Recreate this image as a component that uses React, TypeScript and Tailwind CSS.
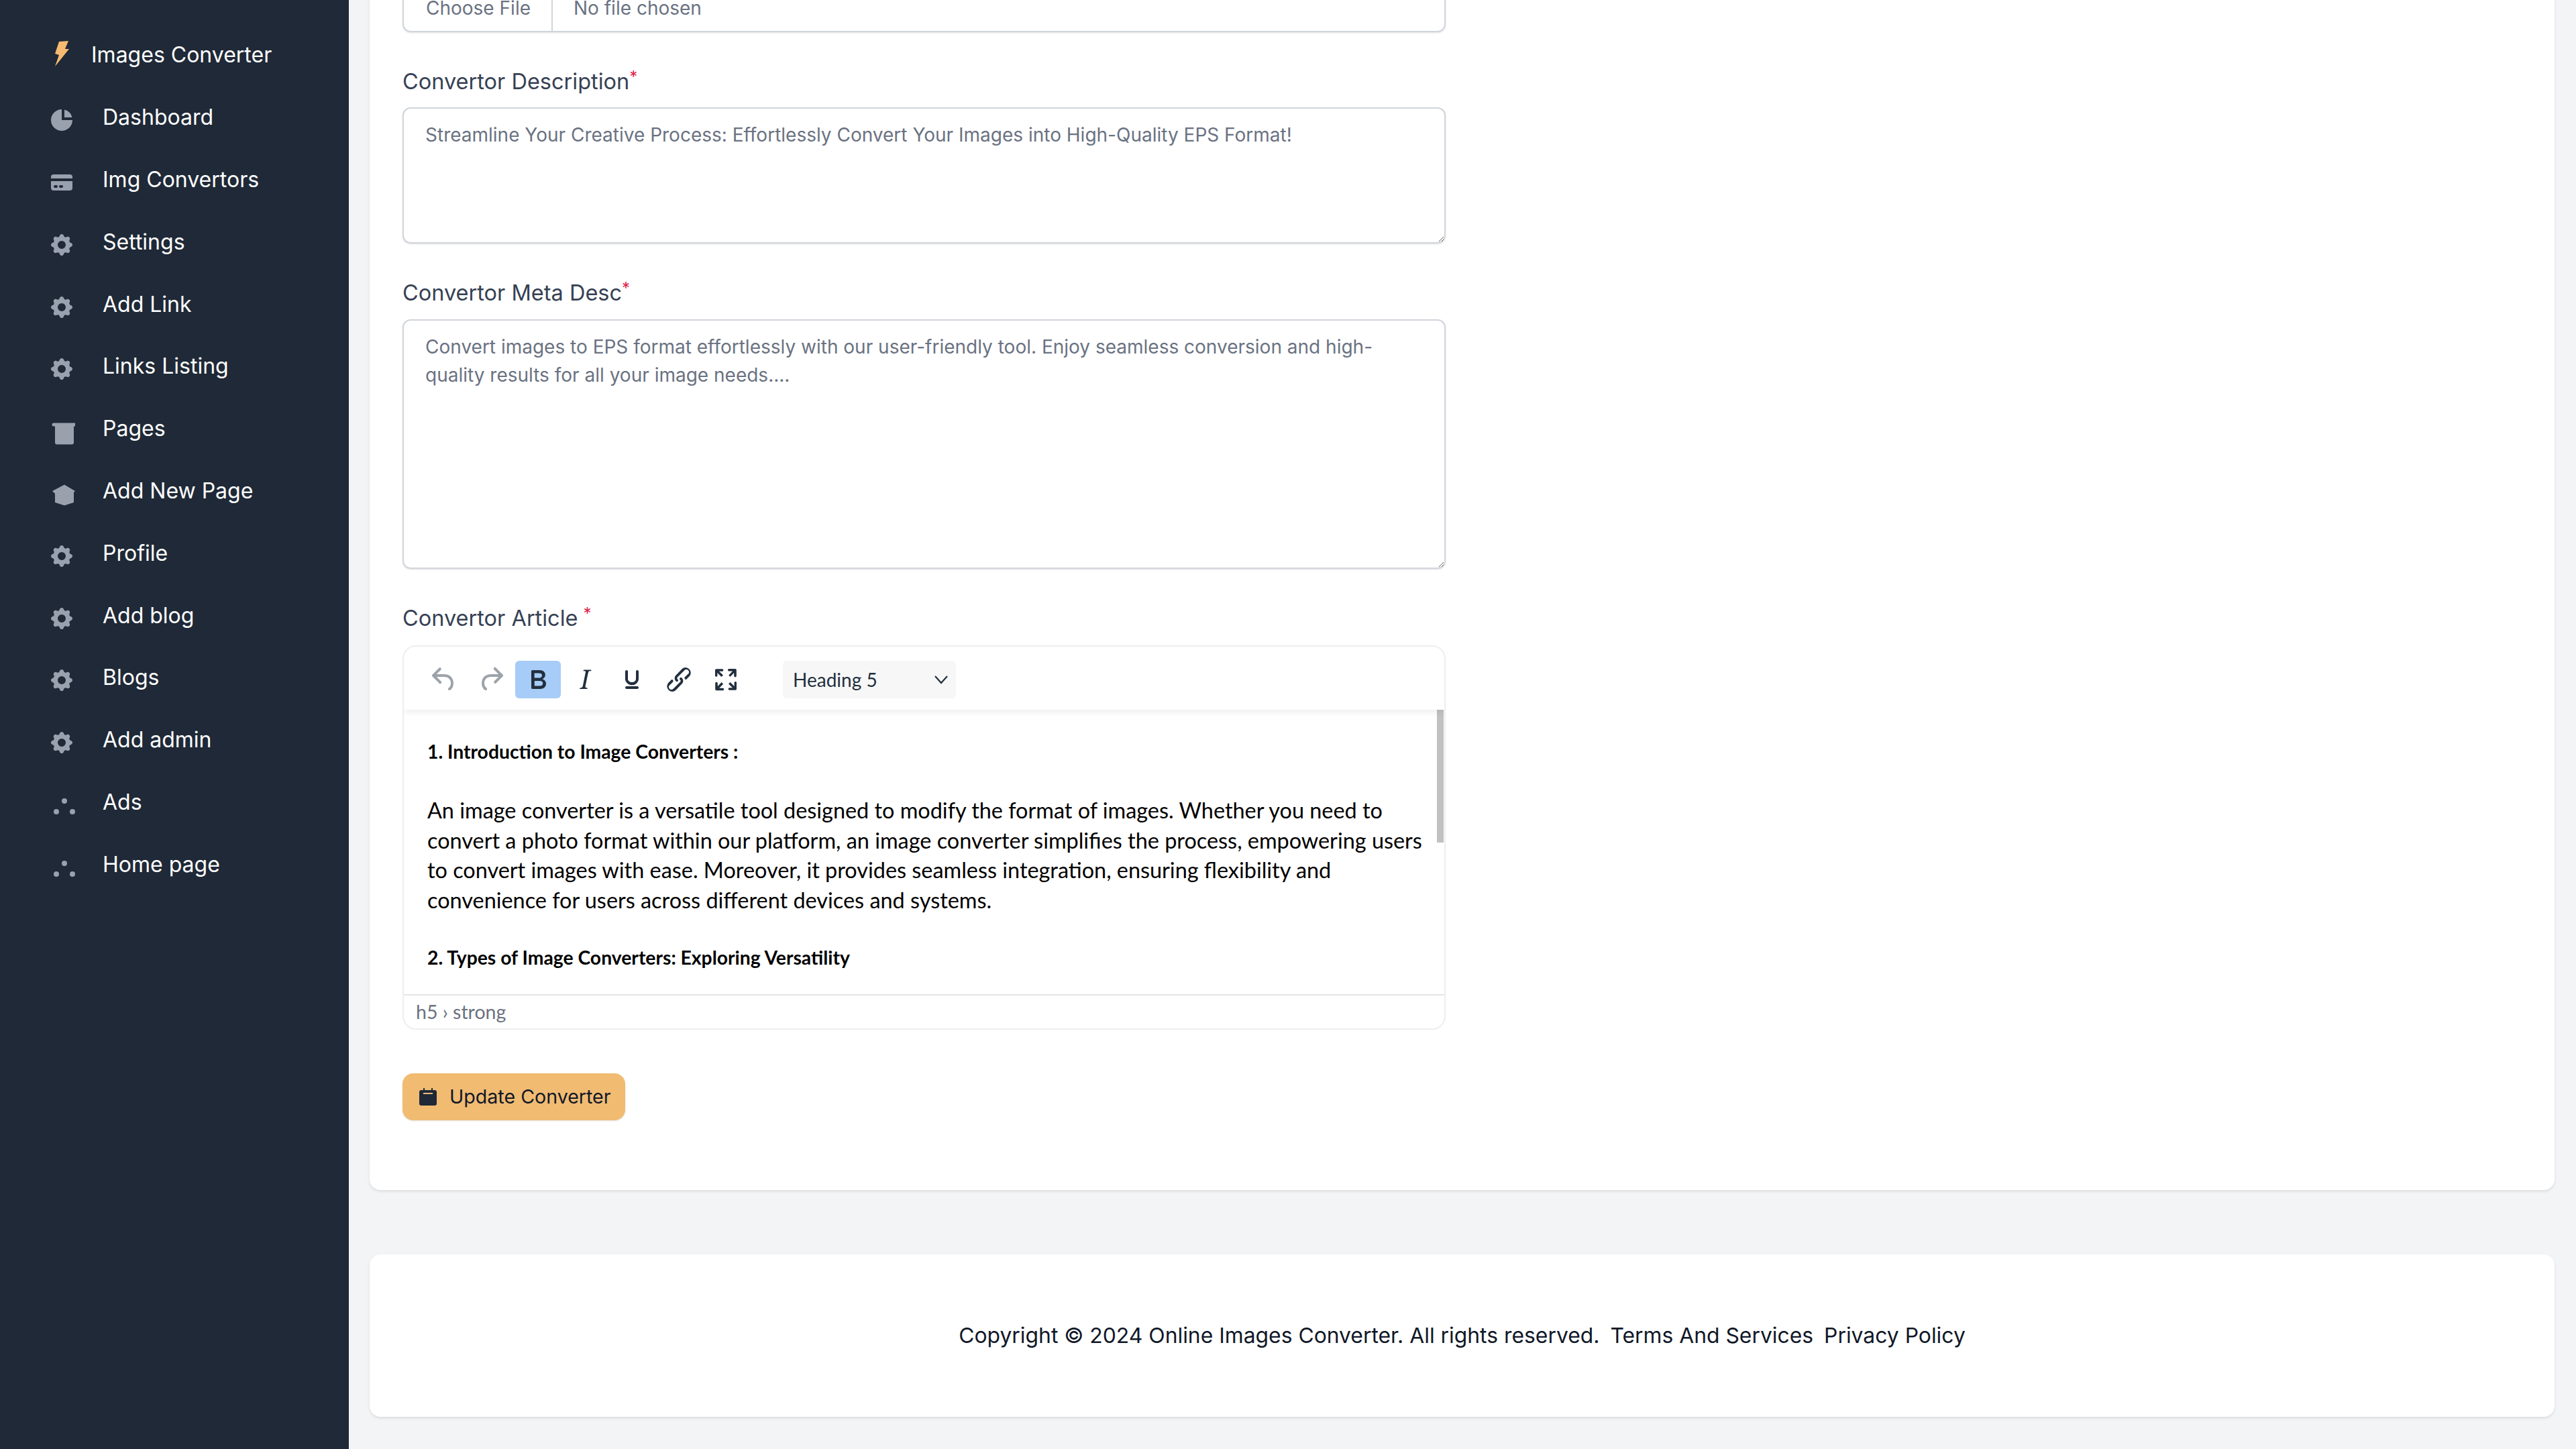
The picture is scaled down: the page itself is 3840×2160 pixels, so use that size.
const GEAR =
  "M11.49 3.17c-.38-1.56-2.6-1.56-2.98 0a1.532 1.532 0 01-2.286.948c-1.372-.836-2.942.734-2.106 2.106.54.886.061 2.042-.947 2.287-1.561.379-1.561 2.6 0 2.978a1.532 1.532 0 01.947 2.287c-.836 1.372.734 2.942 2.106 2.106a1.532 1.532 0 012.287.947c.379 1.561 2.6 1.561 2.978 0a1.533 1.533 0 012.287-.947c1.372.836 2.942-.734 2.106-2.106a1.533 1.533 0 01.947-2.287c1.561-.379 1.561-2.6 0-2.978a1.532 1.532 0 01-.947-2.287c.836-1.372-.734-2.942-2.106-2.106a1.532 1.532 0 01-2.287-.947zM10 13a3 3 0 100-6 3 3 0 000 6z";

function SideIcon({ name }: { name: string }) {
  if (name === "pie") {
    return (
      <svg viewBox="0 0 20 20" fill="currentColor" className="w-10 h-10 text-gray-400">
        <path d="M2 10a8 8 0 018-8v8h8a8 8 0 11-16 0z" />
        <path d="M12 2.252A8.014 8.014 0 0117.748 8H12V2.252z" />
      </svg>
    );
  }
  if (name === "card") {
    return (
      <svg viewBox="0 0 20 20" fill="currentColor" className="w-10 h-10 text-gray-400">
        <path d="M4 4a2 2 0 00-2 2v1h16V6a2 2 0 00-2-2H4z" />
        <path
          fillRule="evenodd"
          d="M18 9H2v5a2 2 0 002 2h12a2 2 0 002-2V9zM4 13a1 1 0 011-1h1a1 1 0 110 2H5a1 1 0 01-1-1zm5-1a1 1 0 100 2h1a1 1 0 100-2H9z"
        />
      </svg>
    );
  }
  if (name === "box") {
    return (
      <svg viewBox="0 0 20 20" fill="currentColor" className="w-10 h-10 text-gray-400 translate-x-[4px]">
        <path d="M2 3.75h16v2.500H2a1.250 1.250 0 010-2.500z" />
        <path d="M3 6h14v12.250a1.500 1.500 0 01-1.500 1.500h-11a1.500 1.500 0 01-1.500-1.500z" />
      </svg>
    );
  }
  if (name === "cap") {
    return (
      <svg viewBox="0 0 20 20" fill="currentColor" className="w-10 h-10 text-gray-400 translate-x-[4px]">
        <path d="M10 3.250L18 8l-1 1v7.500l-7 2.250-7-2.250V10L1 8z" />
      </svg>
    );
  }
  if (name === "dots") {
    return (
      <svg viewBox="0 0 20 20" fill="currentColor" className="w-10 h-10 text-gray-400 translate-x-[4px]">
        <circle cx="10" cy="7" r="2" />
        <circle cx="4" cy="15" r="2" />
        <circle cx="16" cy="15" r="2" />
      </svg>
    );
  }
  return (
    <svg viewBox="0 0 20 20" fill="currentColor" className="w-10 h-10 text-gray-400">
      <path fillRule="evenodd" d={GEAR} />
    </svg>
  );
}

const navItems = [
  { label: "Dashboard", icon: "pie" },
  { label: "Img Convertors", icon: "card" },
  { label: "Settings", icon: "gear" },
  { label: "Add Link", icon: "gear" },
  { label: "Links Listing", icon: "gear" },
  { label: "Pages", icon: "box" },
  { label: "Add New Page", icon: "cap" },
  { label: "Profile", icon: "gear" },
  { label: "Add blog", icon: "gear" },
  { label: "Blogs", icon: "gear" },
  { label: "Add admin", icon: "gear" },
  { label: "Ads", icon: "dots" },
  { label: "Home page", icon: "dots" },
];

function Sidebar() {
  return (
    <aside className="w-[520px] shrink-0 bg-[#1f2937] text-white pt-[36px]">
      <div className="flex items-center h-[92.800px] pl-[81px] text-[32px]">
        <svg viewBox="0 0 22 40" className="w-[22px] h-10 mb-[5px]" fill="#f6bb70">
          <path d="M7 2l14-1-5 12h6L1 39l6-17-6-2z" />
        </svg>
        <span className="ml-[33px]">Images Converter</span>
      </div>
      <ul>
        {navItems.map((item) => (
          <li key={item.label} className="flex items-center h-[92.800px] pl-[72px] text-[32px]">
            <span className="mt-[8px]">
              <SideIcon name={item.icon} />
            </span>
            <span className="ml-[41px]">{item.label}</span>
          </li>
        ))}
      </ul>
    </aside>
  );
}

function FieldLabel({ text, gap }: { text: string; gap?: boolean }) {
  return (
    <label className="flex h-10 items-center mt-[53px] text-[32.500px] text-gray-700 translate-y-[1px]">
      {text}
      <span className={gap ? "ml-[8px] mb-[14px] text-[#e11d48] text-[24px]" : "mb-[14px] text-[#e11d48] text-[24px]"}>*</span>
    </label>
  );
}

function ToolIcon({ d, muted, active }: { d: string; muted?: boolean; active?: boolean }) {
  return (
    <button
      className={
        active
          ? "flex items-center justify-center w-[68px] h-[56px] mr-[2px] rounded-[6px] bg-[#a6ccf7]"
          : "flex items-center justify-center w-[68px] h-[56px] mr-[2px] rounded-[6px]"
      }
    >
      <svg viewBox="0 0 24 24" className="w-12 h-12" fill={muted ? "#9da3aa" : "#222f3e"}>
        <path d={d} />
      </svg>
    </button>
  );
}

function Editor() {
  return (
    <div className="relative h-[573px] flex flex-col border-2 border-[#eeeeee] rounded-[20px] overflow-hidden font-['Lato',sans-serif]">
      <div className="flex items-center h-[94px] shrink-0 pl-[26px] pt-[4px] shadow-[0_4px_8px_rgba(34,47,62,0.08)] z-10 bg-white">
        <ToolIcon muted d="M6.4 8H12c3.7 0 6.2 2 6.8 5.1.6 2.7-.4 5.600-2.300 6.800a1 1 0 0 1-1-1.800c1.100-.6 1.800-2.700 1.400-4.600-.5-2.100-2.100-3.500-4.900-3.500H6.400l3.300 3.300a1 1 0 1 1-1.400 1.400l-5-5a1 1 0 0 1 0-1.400l5-5a1 1 0 0 1 1.400 1.400L6.400 8Z" />
        <ToolIcon muted d="M17.600 10H12c-2.800 0-4.400 1.400-4.900 3.500-.4 2 .3 4 1.400 4.600a1 1 0 1 1-1 1.800c-2-1.200-2.900-4.100-2.300-6.800.6-3 3-5.100 6.800-5.100h5.600l-3.300-3.300a1 1 0 1 1 1.400-1.400l5 5a1 1 0 0 1 0 1.400l-5 5a1 1 0 0 1-1.400-1.400l3.300-3.300Z" />
        <ToolIcon active d="M7.800 19c-.3 0-.5 0-.6-.2l-.2-.5V5.700c0-.2 0-.4.2-.5l.6-.2h5c1.500 0 2.700.3 3.500 1 .7.6 1.100 1.400 1.100 2.500a3 3 0 0 1-.6 1.900c-.4.6-1 1-1.600 1.200.4.100.9.300 1.300.6s.8.700 1 1.200c.4.400.5 1 .5 1.600 0 1.300-.4 2.300-1.300 3-.8.700-2.100 1-3.800 1H7.800zm5-8.300c.6 0 1.200-.1 1.600-.5.4-.3.6-.7.6-1.300 0-1.100-.8-1.700-2.300-1.700H9.300v3.500h3.400zm.5 6c.7 0 1.300-.1 1.700-.4.4-.4.6-.9.6-1.500s-.2-1-.7-1.400c-.4-.3-1-.4-2-.4H9.400v3.800h4z" />
        <ToolIcon d="m16.700 4.700-.1.900h-.3c-.6 0-1 0-1.400.3-.3.3-.4.600-.5 1.100l-2.100 9.800v.6c0 .5.4.8 1.400.8h.2l-.2.8H8l.2-.8h.2c1.100 0 1.800-.5 2-1.500l2-9.800.1-.5c0-.6-.4-.8-1.400-.8h-.3l.2-.9h5.800Z" />
        <ToolIcon d="M16 5c.6 0 1 .4 1 1v5.500a4 4 0 0 1-.4 1.800l-1 1.400a5.300 5.300 0 0 1-5.500 1 5 5 0 0 1-1.600-1c-.5-.4-.8-.9-1.100-1.400a4 4 0 0 1-.4-1.800V6c0-.6.4-1 1-1s1 .4 1 1v5.500c0 .3 0 .6.2 1l.6.7a3.300 3.300 0 0 0 2.200.8 3.400 3.400 0 0 0 2.200-.8c.3-.2.4-.5.6-.8l.2-.9V6c0-.6.4-1 1-1ZM8 17h8c.6 0 1 .4 1 1s-.4 1-1 1H8a1 1 0 0 1 0-2Z" />
        <ToolIcon d="M6.200 12.300a1 1 0 0 1 1.400 1.400l-2 2a2 2 0 1 0 2.600 2.800l4.800-4.800a1 1 0 0 0 0-1.400 1 1 0 1 1 1.400-1.300 2.900 2.900 0 0 1 0 4L9.600 20a3.900 3.900 0 0 1-5.500-5.500l2-2Zm11.600-.6a1 1 0 0 1-1.400-1.400l2-2a2 2 0 1 0-2.600-2.800L11 10.300a1 1 0 0 0 0 1.400A1 1 0 1 1 9.600 13a2.900 2.900 0 0 1 0-4L14.400 4a3.900 3.900 0 0 1 5.500 5.500l-2 2Z" />
        <ToolIcon d="m15.300 10-1.200-1.300 2.900-3h-2.300a.9.9 0 1 1 0-1.700H19c.5 0 .9.4.9.9v4.400a.9.9 0 1 1-1.800 0V7l-2.900 3Zm0 4 3 3v-2.300a.9.9 0 1 1 1.700 0V19c0 .5-.4.9-.9.9h-4.400a.9.9 0 1 1 0-1.800H17l-3-2.900 1.300-1.200ZM10 15.400l-2.900 3h2.300a.9.9 0 1 1 0 1.700H5a.9.9 0 0 1-.9-.9v-4.400a.9.9 0 1 1 1.800 0V17l2.900-3 1.200 1.300ZM8.700 10 5.700 7v2.300a.9.9 0 0 1-1.700 0V5c0-.5.4-.9.9-.9h4.400a.9.9 0 0 1 0 1.800H7l3 2.900-1.300 1.200Z" />
        <div className="ml-[49px] flex items-center justify-between w-[258px] h-[56px] pl-[15px] pr-[2px] rounded-[6px] bg-[#f7f7f7] text-[28px] text-[#222f3e]">
          <span>Heading 5</span>
          <svg viewBox="0 0 20 20" className="w-10 h-10" fill="none" stroke="#222f3e" strokeWidth="1.100">
            <path d="M5.500 7.500L10 12.500l4.500-5" />
          </svg>
        </div>
      </div>

      <div className="flex-1 overflow-hidden pl-[35px] pr-[24px] text-[32.400px] leading-[44.600px] text-black">
        <h5 className="text-[28.300px] font-bold mt-[44px] leading-[36px]">1. Introduction to Image Converters :</h5>
        <p className="mt-[48px] w-[1492px]">
          An image converter is a versatile tool designed to modify the format of images. Whether you need to convert a
          photo format within our platform, an image converter simplifies the process, empowering users to convert
          images with ease. Moreover, it provides seamless integration, ensuring flexibility and convenience for users
          across different devices and systems.
        </p>
        <h5 className="text-[28.300px] font-bold mt-[45px] leading-[36px]">2. Types of Image Converters: Exploring Versatility</h5>
      </div>

      <div className="absolute right-[1px] top-[94px] w-[10px] h-[198px] bg-[#c1c1c1]" />

      <div className="flex items-center h-[51px] shrink-0 border-t-2 border-[#e5e5e5] pl-[18px] text-[28.500px] text-[#6b7280]">
        h5 › strong
      </div>
    </div>
  );
}

export default function App() {
  return (
    <div className="flex h-[2160px] overflow-hidden bg-[#f3f4f6] font-['Inter',sans-serif]">
      <Sidebar />
      <main className="flex-1 pl-[31px] pr-[32px]">
        <div className="-mt-[100px] h-[1874px] pt-[75px] pl-[49px] rounded-[16px] bg-white shadow-[0_2px_4px_rgba(0,0,0,0.1)]">
          <div className="w-[1555px]">
            <div className="flex items-center h-[73px] border-2 border-[#d1d5db] rounded-[12px] shadow-sm text-[28px] text-gray-500">
              <span className="flex items-center h-full w-[222px] pl-[33px] border-r-2 border-[#d1d5db]">Choose File</span>
              <span className="ml-[31px]">No file chosen</span>
            </div>

            <FieldLabel text="Convertor Description" />
            <textarea
              readOnly
              className="block mt-[19px] w-full h-[203px] border-2 border-[#d1d5db] rounded-[12px] px-[32px] py-[18px] text-[28px] leading-[42px] shadow-sm placeholder:text-gray-500"
              placeholder="Streamline Your Creative Process: Effortlessly Convert Your Images into High-Quality EPS Format!"
            />

            <FieldLabel text="Convertor Meta Desc" />
            <textarea
              readOnly
              className="block mt-5 w-full h-[372px] border-2 border-[#d1d5db] rounded-[12px] px-[32px] py-[18px] text-[28px] leading-[42px] shadow-sm placeholder:text-gray-500"
              placeholder="Convert images to EPS format effortlessly with our user-friendly tool. Enjoy seamless conversion and high-quality results for all your image needs...."
            />

            <FieldLabel text="Convertor Article" gap />
            <div className="mt-[21px]">
              <Editor />
            </div>

            <button className="flex items-center mt-[65px] w-[332px] h-[70px] pl-[25px] rounded-[16px] bg-[#f1bb72] text-[28.600px] text-gray-900 shadow-sm">
              <svg viewBox="0 0 26 26" className="w-[26px] h-[26px]" fill="#1f2937">
                <path d="M6 0h2v3h10V0h2v3h3a3 3 0 013 3v17a3 3 0 01-3 3H3a3 3 0 01-3-3V6a3 3 0 013-3h3zM6 7v2h14V7z" fillRule="evenodd" />
              </svg>
              <span className="ml-[19px]">Update Converter</span>
            </button>
          </div>
        </div>

        <footer className="flex items-center justify-center gap-[16px] mt-[96px] h-[242px] rounded-[16px] bg-white shadow-[0_2px_4px_rgba(0,0,0,0.1)] text-[31.850px] text-gray-900">
          <span>Copyright © 2024 Online Images Converter. All rights reserved.</span>
          <a>Terms And Services</a>
          <a>Privacy Policy</a>
        </footer>
      </main>
    </div>
  );
}
